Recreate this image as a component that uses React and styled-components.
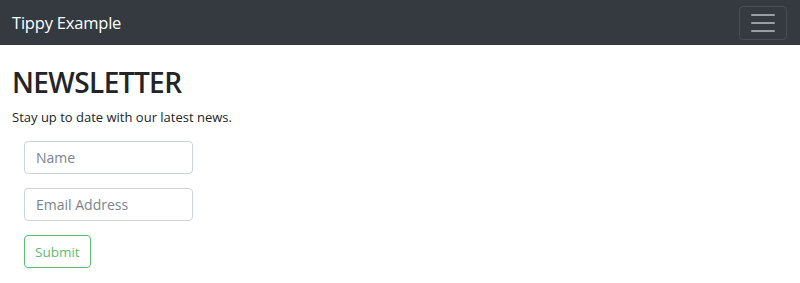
import React from "react";
import styled, { createGlobalStyle } from "styled-components";

const Global = createGlobalStyle`
  * { box-sizing: border-box; }
  html, body { margin: 0; padding: 0; background: #fff; }
  body {
    font-family: "Open Sans", "Noto Sans", sans-serif;
    color: #212529;
    font-size: 14px;
  }
`;

const Navbar = styled.nav`
  height: 45px;
  background: #343a40;
  display: flex;
  align-items: center;
  justify-content: space-between;
  padding: 0 12px;
`;

const Brand = styled.a`
  color: #fff;
  font-size: 16.5px;
  text-decoration: none;
  letter-spacing: -0.2px;
`;

const Toggler = styled.button`
  width: 48px;
  height: 34px;
  margin-right: 1px;
  border: 1px solid rgba(255, 255, 255, 0.1);
  border-radius: 4px;
  background: transparent;
  display: flex;
  align-items: center;
  justify-content: center;
  padding: 0;
`;

const Main = styled.main`
  padding: 0 12px;
`;

const Title = styled.h2`
  margin: 21px 0 0;
  font-size: 28px;
  font-weight: 600;
  line-height: 1.2;
  letter-spacing: -0.6px;
`;

const Lead = styled.p`
  margin: 8px 0 0;
  font-size: 13px;
  line-height: 1.5;
`;

const Form = styled.form`
  padding: 14px 12px 0;
  display: flex;
  flex-direction: column;
  align-items: flex-start;
  gap: 14px;
`;

const Input = styled.input`
  width: 169px;
  height: 33px;
  padding: 0 11px;
  border: 1px solid #ced4da;
  border-radius: 4px;
  font-family: inherit;
  font-size: 14px;
  color: #495057;
  &::placeholder { color: #7b848c; }
`;

const SubmitButton = styled.button`
  height: 33px;
  padding: 0 10px;
  border: 1px solid #28a745;
  border-radius: 4px;
  background: transparent;
  color: #28a745;
  opacity: 0.75;
  font-family: inherit;
  font-size: 13.5px;
`;

const ToggleIcon = () => (
  <svg width="30" height="30" viewBox="0 0 30 30">
    <path
      stroke="rgba(255,255,255,0.5)"
      strokeWidth="2"
      strokeLinecap="round"
      strokeMiterlimit="10"
      d="M4 7h22M4 15h22M4 23h22"
    />
  </svg>
);

export default function App() {
  return (
    <>
      <Global />
      <Navbar>
        <Brand href="#">Tippy Example</Brand>
        <Toggler type="button" aria-label="Toggle navigation">
          <ToggleIcon />
        </Toggler>
      </Navbar>
      <Main>
        <Title>NEWSLETTER</Title>
        <Lead>Stay up to date with our latest news.</Lead>
        <Form onSubmit={(e) => e.preventDefault()}>
          <Input type="text" placeholder="Name" />
          <Input type="email" placeholder="Email Address" />
          <SubmitButton type="submit">Submit</SubmitButton>
        </Form>
      </Main>
    </>
  );
}
